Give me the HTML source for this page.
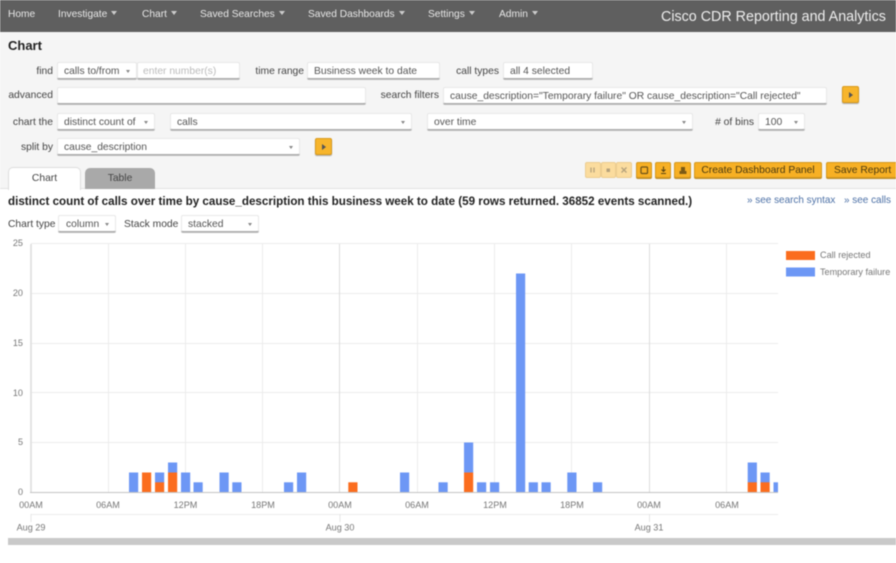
<!DOCTYPE html>
<html><head><meta charset="utf-8"><title>Chart</title>
<style>
html,body{margin:0;padding:0;background:#fff}
#p{position:relative;width:896px;height:563px;overflow:hidden;background:#fff;font-family:"Liberation Sans",sans-serif;font-size:10.3px;color:#333;filter:blur(.4px)}
#p div{position:absolute;box-sizing:border-box;white-space:nowrap}
.nav{left:0;top:0;width:896px;height:32px;background:#5f5f5f}
.n{top:8px;color:#e8e8e8;font-size:10.2px;line-height:14px}
.n i{display:inline-block;width:0;height:0;border:3.5px solid transparent;border-top:4px solid #ccc;border-bottom:0;margin-left:4px;vertical-align:2px}
.hd{left:0;top:32px;width:896px;height:157px;background:#f5f5f5;border-bottom:1px solid #e2e2e2}
.l{line-height:14px;text-align:right;color:#444;font-size:10.3px}
.f{background:#fff;border:1px solid #e8e8e8;border-bottom-color:#aaa;border-radius:2px;box-shadow:0 1px 0 #bbb;height:17px;line-height:17px;padding-left:6px;font-size:10.3px;color:#555}
.f b{position:absolute;right:6px;top:7px;width:0;height:0;border:2.5px solid transparent;border-top:3px solid #888;border-bottom:0}
.go{width:17px;height:17px;background:#f7b52c;border:1px solid #d99a1c;border-radius:2px;box-shadow:0 1px 1px #aaa}
.go:after{content:"";position:absolute;left:6px;top:5px;border:3px solid transparent;border-left:4px solid #555;border-right:0}
.b{top:162px;height:16px;background:#f7b024;border:1px solid #d5981d;border-radius:2px;box-shadow:0 1px 0 #b98a2a;line-height:16px;text-align:center;color:#4a3a10;font-size:10.3px}
.pale{background:#fbdc9e;border-color:#eccd90;box-shadow:none}
.b svg{position:absolute;left:3px;top:3px}
.lnk{color:#4c70a6;font-size:9.95px;top:194px;line-height:14px}
#c text{font-family:"Liberation Sans",sans-serif;font-size:9.1px;fill:#777}
</style></head><body>
<div id="p">
<div class="nav"></div>
<div class="n" style="left:8px">Home</div>
<div class="n" style="left:58px">Investigate<i></i></div>
<div class="n" style="left:142px">Chart<i></i></div>
<div class="n" style="left:200px">Saved Searches<i></i></div>
<div class="n" style="left:308px">Saved Dashboards<i></i></div>
<div class="n" style="left:428px">Settings<i></i></div>
<div class="n" style="left:499px">Admin<i></i></div>
<div style="left:661px;top:7px;font-size:14.3px;line-height:20px;color:#eee">Cisco CDR Reporting and Analytics</div>

<div class="hd"></div>
<div style="left:8px;top:38px;font-size:13px;font-weight:bold;color:#222;line-height:16px">Chart</div>

<div class="l" style="right:843px;top:65px">find</div>
<div class="f" style="left:57px;top:62px;width:80px">calls to/from<b></b></div>
<div class="f" style="left:137px;top:62px;width:103px;color:#bbb;padding-left:5px">enter number(s)</div>
<div class="l" style="right:592px;top:65px">time range</div>
<div class="f" style="left:307px;top:62px;width:133px">Business week to date</div>
<div class="l" style="right:397px;top:65px">call types</div>
<div class="f" style="left:503px;top:62px;width:90px">all 4 selected</div>

<div class="l" style="right:843px;top:89px">advanced</div>
<div class="f" style="left:57px;top:87px;width:309px"></div>
<div class="l" style="right:457px;top:89px">search filters</div>
<div class="f" style="left:443px;top:87px;width:384px">cause_description="Temporary failure" OR cause_description="Call rejected"</div>
<div class="go" style="left:842px;top:86px"></div>

<div class="l" style="right:843px;top:116px">chart the</div>
<div class="f" style="left:57px;top:113px;width:98px">distinct count of<b></b></div>
<div class="f" style="left:170px;top:113px;width:242px">calls<b></b></div>
<div class="f" style="left:427px;top:113px;width:266px">over time<b></b></div>
<div class="l" style="right:142px;top:116px"># of bins</div>
<div class="f" style="left:758px;top:113px;width:47px">100<b></b></div>

<div class="l" style="right:843px;top:141px">split by</div>
<div class="f" style="left:57px;top:138px;width:243px">cause_description<b></b></div>
<div class="go" style="left:315px;top:138px"></div>

<div style="left:8px;top:167px;width:73px;height:23px;background:#fff;border:1px solid #ddd;border-bottom:0;border-radius:5px 5px 0 0;text-align:center;line-height:21px;color:#444">Chart</div>
<div style="left:85px;top:168px;width:70px;height:21px;background:#a9a9a9;border-radius:5px 5px 0 0;text-align:center;line-height:21px;color:#444">Table</div>

<div class="b pale" style="left:585px;width:16px"><svg width="8" height="8"><path d="M2 1.500V6.500M5 1.500V6.500" stroke="#b5a27c" stroke-width="1.300" fill="none"/></svg></div>
<div class="b pale" style="left:601px;width:15px"><svg width="8" height="8"><rect x="1.500" y="2.500" width="3.500" height="3.500" fill="#b5a27c"/></svg></div>
<div class="b pale" style="left:616px;width:16px"><svg width="8" height="8"><path d="M1.500 1.500L6.500 6.500M6.500 1.500L1.500 6.500" stroke="#b5a27c" stroke-width="1.300" fill="none"/></svg></div>
<div class="b" style="left:636px;width:16px"><svg width="9" height="9"><rect x="1" y="1" width="6.500" height="6.500" rx="1" fill="none" stroke="#6b5218" stroke-width="1.200"/></svg></div>
<div class="b" style="left:655px;width:16px"><svg width="9" height="9"><path d="M4.500 0.500V5M2.500 3.500L4.500 5.500L6.500 3.500M2 7.500H7" stroke="#5b4512" stroke-width="1.100" fill="none"/></svg></div>
<div class="b" style="left:674px;width:17px"><svg width="10" height="9"><path d="M3 1H7V5H3ZM1.500 5H8.500V8H1.500Z" fill="#5b4512" fill-opacity=".8"/></svg></div>
<div class="b" style="left:694px;width:128px">Create Dashboard Panel</div>
<div class="b" style="left:826px;width:72px;text-align:left;padding-left:7px">Save Report</div>

<div style="left:8px;top:194px;font-size:11.64px;font-weight:bold;color:#222;line-height:15px">distinct count of calls over time by cause_description this business week to date (59 rows returned. 36852 events scanned.)</div>
<div class="lnk" style="left:747px">&raquo; see search syntax</div>
<div class="lnk" style="left:844px">&raquo; see calls</div>

<div class="l" style="left:8px;top:218px">Chart type</div>
<div class="f" style="left:58px;top:215px;width:58px;padding-left:7px">column<b></b></div>
<div class="l" style="left:124px;top:218px">Stack mode</div>
<div class="f" style="left:181px;top:215px;width:78px;padding-left:6px">stacked<b></b></div>

<svg id="c" style="position:absolute;left:0;top:235px" width="896" height="300" viewBox="0 235 896 300">
<g stroke="#ececec" stroke-width="1" fill="none">
<path d="M31 243.500H778M31 293.500H778M31 343.500H778M31 392.500H778M31 442.500H778"/>
<path d="M108.500 244V492M185.500 244V492M262.500 244V492M417.500 244V492M494.500 244V492M571.500 244V492M726.500 244V492"/>
<path d="M31 514.500H778"/>
</g>
<g stroke="#dcdcdc" fill="none">
<path d="M31 244V492" stroke-width="1.500"/>
<path d="M339.500 244V492M649.500 244V492"/>
<path d="M31 514V522M340 514V522M649.500 514V522" stroke="#e6e6e6"/>
</g>
<g fill="#6d97f5">
<rect x="129" y="472.500" width="9.200" height="19.500"/>
<rect x="155" y="472.500" width="9.200" height="10"/>
<rect x="168" y="462.500" width="9.200" height="10"/>
<rect x="181" y="472.500" width="9.200" height="19.500"/>
<rect x="193.500" y="482.300" width="9.200" height="9.700"/>
<rect x="219.500" y="472.500" width="9.200" height="19.500"/>
<rect x="232.300" y="482.300" width="9.200" height="9.700"/>
<rect x="284" y="482.300" width="9.200" height="9.700"/>
<rect x="297" y="472.500" width="9.200" height="19.500"/>
<rect x="400" y="472.500" width="9.200" height="19.500"/>
<rect x="438.500" y="482.300" width="9.200" height="9.700"/>
<rect x="464" y="442.500" width="9.200" height="30"/>
<rect x="477" y="482.300" width="9.200" height="9.700"/>
<rect x="490" y="482.300" width="9.200" height="9.700"/>
<rect x="516" y="273.500" width="9.200" height="218.500"/>
<rect x="528.700" y="482.300" width="9.200" height="9.700"/>
<rect x="541.500" y="482.300" width="9.200" height="9.700"/>
<rect x="567.300" y="472.500" width="9.200" height="19.500"/>
<rect x="593" y="482.300" width="9.200" height="9.700"/>
<rect x="747.700" y="462.500" width="9.200" height="20"/>
<rect x="760.500" y="472.500" width="9.200" height="10"/>
<rect x="773.500" y="482.300" width="4.500" height="9.700"/>
</g>
<g fill="#fb6d1e">
<rect x="142" y="472.500" width="9.200" height="19.500"/>
<rect x="155" y="482.300" width="9.200" height="9.700"/>
<rect x="168" y="472.500" width="9.200" height="19.500"/>
<rect x="348.300" y="482.300" width="9.200" height="9.700"/>
<rect x="464" y="472.500" width="9.200" height="19.500"/>
<rect x="747.700" y="482.300" width="9.200" height="9.700"/>
<rect x="760.500" y="482.300" width="9.200" height="9.700"/>
</g>
<path d="M30 492.500H778" stroke="#c4c4c4" fill="none"/>
<g text-anchor="end">
<text x="23" y="246">25</text><text x="23" y="296">20</text><text x="23" y="346">15</text><text x="23" y="396">10</text><text x="23" y="445">5</text><text x="23" y="495">0</text>
</g>
<g text-anchor="middle">
<text x="31" y="508">00AM</text><text x="108" y="508">06AM</text><text x="185.500" y="508">12PM</text><text x="263" y="508">18PM</text>
<text x="340" y="508">00AM</text><text x="417" y="508">06AM</text><text x="495" y="508">12PM</text><text x="572" y="508">18PM</text>
<text x="649" y="508">00AM</text><text x="727" y="508">06AM</text>
<text x="31" y="530.500">Aug 29</text><text x="340" y="530.500">Aug 30</text><text x="649" y="530.500">Aug 31</text>
</g>
<rect x="786" y="251" width="29" height="9" fill="#fb6d1e"/>
<rect x="786" y="267.500" width="29" height="9" fill="#6d97f5"/>
<text x="820" y="258">Call rejected</text>
<text x="820" y="275">Temporary failure</text>
</svg>
<div style="left:8px;top:538px;width:888px;height:7px;background:#c9c9c9"></div>
</div>
</body></html>
